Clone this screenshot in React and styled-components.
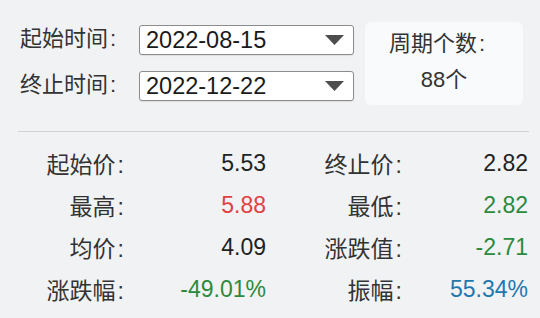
import React from 'react';
import styled, { createGlobalStyle } from 'styled-components';

const GlobalStyle = createGlobalStyle`
  html, body {
    margin: 0;
    padding: 0;
    background: #f1f2f4;
  }
  body {
    font-family: 'Liberation Sans', 'Noto Sans CJK SC', sans-serif;
    color: #222;
  }
`;

const Page = styled.div`
  width: 540px;
  height: 318px;
  box-sizing: border-box;
  background: #f1f2f4;
  overflow: hidden;
`;

const Top = styled.div`
  display: flex;
  align-items: flex-start;
  padding: 22px 17px 0 20px;
`;

const DateColumn = styled.div`
  display: flex;
  flex-direction: column;
  gap: 16px;
  padding-top: 3px;
`;

const DateRow = styled.div`
  display: flex;
  align-items: center;
`;

// label text with a detached colon, like the original widget
const Labelled = styled.span`
  font-size: 22px;
  color: #333;
  &::after {
    content: ':';
    margin-left: 2px;
  }
`;

const DateLabel = styled(Labelled)`
  width: 119px;
  line-height: 30px;
  margin-top: -3px;
`;

const Select = styled.div`
  width: 215px;
  height: 30px;
  box-sizing: border-box;
  display: flex;
  align-items: center;
  justify-content: space-between;
  padding: 0 9px 0 6px;
  background: #fff;
  border: 1px solid #8c8c8c;
  border-radius: 3px;
  box-shadow: 0 1px 1px rgba(0, 0, 0, 0.08);
  font-size: 23.5px;
  color: #1a1a1a;
`;

const Arrow = () => (
  <svg width="19" height="10" viewBox="0 0 19 10">
    <polygon points="0,0 19,0 9.5,10" fill="#4d4d4d" />
  </svg>
);

const PeriodBox = styled.div`
  margin-left: 11px;
  width: 158px;
  height: 83px;
  display: flex;
  flex-direction: column;
  align-items: center;
  justify-content: center;
  gap: 6px;
  background: #f9fafb;
  border-radius: 6px;
  font-size: 22px;
  color: #333;
  line-height: 30px;
`;

const PeriodTitle = styled(Labelled)`
  margin-right: 14px;
  margin-top: -4px;
`;

const PeriodCount = styled.span`
  font-size: 22px;
  color: #333;
`;

const Divider = styled.div`
  margin: 26px 11px 0 18px;
  height: 1px;
  background: #cfd2d5;
`;

const Stats = styled.div`
  display: grid;
  grid-template-columns: 124px 142px 136px 126px;
  grid-auto-rows: 42px;
  margin-top: 10px;
  align-items: center;
`;

const StatLabel = styled(Labelled)`
  text-align: right;
  font-size: 23px;
`;

const colors = {
  up: '#e2413f',
  down: '#2b8a3e',
  info: '#1f77b0',
};

const StatValue = styled.span`
  text-align: right;
  font-size: 23px;
  color: ${(p) => colors[p.$tone] || '#222'};
`;

const stats = [
  ['起始价', '5.53', null, '终止价', '2.82', null],
  ['最高', '5.88', 'up', '最低', '2.82', 'down'],
  ['均价', '4.09', null, '涨跌值', '-2.71', 'down'],
  ['涨跌幅', '-49.01%', 'down', '振幅', '55.34%', 'info'],
];

export default function App() {
  return (
    <Page>
      <GlobalStyle />
      <Top>
        <DateColumn>
          <DateRow>
            <DateLabel>起始时间</DateLabel>
            <Select>
              2022-08-15
              <Arrow />
            </Select>
          </DateRow>
          <DateRow>
            <DateLabel>终止时间</DateLabel>
            <Select>
              2022-12-22
              <Arrow />
            </Select>
          </DateRow>
        </DateColumn>
        <PeriodBox>
          <PeriodTitle>周期个数</PeriodTitle>
          <PeriodCount>88个</PeriodCount>
        </PeriodBox>
      </Top>
      <Divider />
      <Stats>
        {stats.map(([l1, v1, t1, l2, v2, t2]) => (
          <React.Fragment key={l1}>
            <StatLabel>{l1}</StatLabel>
            <StatValue $tone={t1}>{v1}</StatValue>
            <StatLabel>{l2}</StatLabel>
            <StatValue $tone={t2}>{v2}</StatValue>
          </React.Fragment>
        ))}
      </Stats>
    </Page>
  );
}
